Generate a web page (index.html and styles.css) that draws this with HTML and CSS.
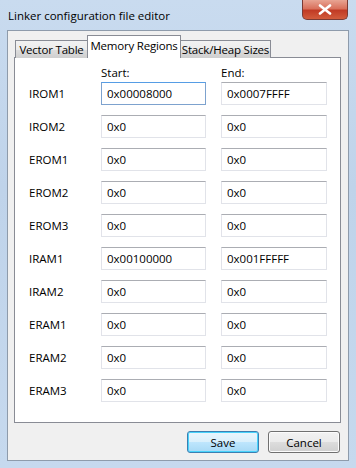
FILE: index.html
```html
<!DOCTYPE html>
<html lang="en">
<head>
  <meta charset="UTF-8">
  <title>Linker configuration file editor</title>
  <link rel="stylesheet" href="styles.css">
</head>
<body>

<div class="window">
  <div class="titlebar">
    <span class="title">Linker configuration file editor</span>
    <button class="close" title="Close">
      <svg width="14" height="11" viewBox="0 0 14 11">
        <path d="M2 1.5 L12 9.5 M12 1.5 L2 9.5" stroke="#fff" stroke-width="2.6" stroke-linecap="round"/>
      </svg>
    </button>
  </div>

  <div class="client">
    <div class="tabs">
      <span class="tab">Vector Table</span>
      <span class="tab active">Memory Regions</span>
      <span class="tab">Stack/Heap Sizes</span>
    </div>

    <div class="panel">
      <div class="grid heads">
        <span></span>
        <span>Start:</span>
        <span>End:</span>
      </div>
      <div class="grid rows">
        <label>IROM1</label><input class="focus" value="0x00008000"><input value="0x0007FFFF">
        <label>IROM2</label><input value="0x0"><input value="0x0">
        <label>EROM1</label><input value="0x0"><input value="0x0">
        <label>EROM2</label><input value="0x0"><input value="0x0">
        <label>EROM3</label><input value="0x0"><input value="0x0">
        <label>IRAM1</label><input value="0x00100000"><input value="0x001FFFFF">
        <label>IRAM2</label><input value="0x0"><input value="0x0">
        <label>ERAM1</label><input value="0x0"><input value="0x0">
        <label>ERAM2</label><input value="0x0"><input value="0x0">
        <label>ERAM3</label><input value="0x0"><input value="0x0">
      </div>
    </div>

    <div class="buttons">
      <button class="btn default">Save</button>
      <button class="btn">Cancel</button>
    </div>
  </div>
</div>

</body>
</html>
```

FILE: styles.css
```css
body {
  margin: 0;
  font-family: "Open Sans", "Noto Sans", sans-serif;
  font-size: 11.5px;
  color: #000;
  background: #fff;
}

.window {
  width: 356px;
  height: 468px;
  box-sizing: border-box;
  display: flex;
  flex-direction: column;
  background: linear-gradient(to bottom, #c9dbef 0%, #bfd3ea 40%, #c6d9ee 100%);
}

.titlebar {
  height: 30px;
  display: flex;
  align-items: flex-start;
  padding-left: 8px;
}

.title {
  margin-top: 7px;
  line-height: 18px;
  color: #000;
}

.close {
  margin-left: auto;
  margin-right: 8px;
  width: 46px;
  height: 20px;
  padding: 0;
  border: 1px solid #7a3b35;
  border-top: none;
  border-radius: 0 0 5px 5px;
  background: linear-gradient(to bottom, #e8a493 0%, #d9715c 45%, #c13b25 55%, #d25c3c 100%);
  display: flex;
  align-items: center;
  justify-content: center;
}

.client {
  flex: 1;
  margin: 0 7px 7px 7px;
  border: 1px solid #8e9bab;
  background: #f0f0f0;
  padding: 5px 7px 0 6px;
  display: flex;
  flex-direction: column;
}

.tabs {
  display: flex;
  align-items: flex-end;
  padding-left: 1px;
  height: 22px;
  margin-bottom: -1px;
  position: relative;
  z-index: 1;
}

.tab {
  height: 18px;
  box-sizing: border-box;
  padding: 0;
  text-align: center;
  line-height: 17px;
  border: 1px solid #898c95;
  border-bottom: none;
  background: linear-gradient(to bottom, #f2f2f2 0%, #ebebeb 50%, #dddddd 51%, #cfcfcf 100%);
  margin-right: -1px;
  white-space: nowrap;
  letter-spacing: -0.2px;
}

.tab:first-child { width: 73px; }
.tab:last-child { width: 91px; }

.tab.active {
  height: 23px;
  width: 94px;
  background: #fff;
  line-height: 20px;
  padding-bottom: 2px;
  position: relative;
  z-index: 2;
}

.panel {
  width: 327px;
  height: 366px;
  box-sizing: border-box;
  border: 1px solid #898c95;
  background: #fff;
  padding: 7px 0 0 14px;
}

.grid {
  display: grid;
  grid-template-columns: 57px 105px 106px;
  column-gap: 15px;
}

.heads {
  line-height: 16px;
  margin-bottom: 1px;
}

.rows {
  row-gap: 10px;
  grid-auto-rows: 23px;
  align-items: center;
}

.rows label {
  line-height: 23px;
}

.rows input {
  height: 23px;
  width: 100%;
  box-sizing: border-box;
  margin: 0;
  padding: 0 0 1px 5px;
  border: 1px solid #e1e3e9;
  border-top-color: #abadb3;
  border-left-color: #e2e3ea;
  font-family: inherit;
  font-size: 11.5px;
  color: #000;
  background: #fff;
  outline: none;
}

.rows input.focus {
  border-color: #7da2ce;
  border-top-color: #569de5;
}

.buttons {
  display: flex;
  justify-content: flex-end;
  gap: 9px;
  margin-top: 8px;
  padding-right: 1px;
}

.btn {
  width: 72px;
  height: 22px;
  padding: 0;
  border: 1px solid #707070;
  border-radius: 3px;
  background: linear-gradient(to bottom, #f2f2f2 0%, #ebebeb 50%, #dddddd 51%, #cfcfcf 100%);
  font-family: inherit;
  font-size: 11.5px;
  color: #000;
  box-shadow: inset 0 0 0 1px #fcfcfc;
}

.btn.default {
  border-color: #3c7fb1;
  background: linear-gradient(to bottom, #eaf6fd 0%, #d9f0fc 50%, #bee6fd 51%, #a7d9f5 100%);
  box-shadow: inset 0 0 0 1px #48d3fb;
}
```
